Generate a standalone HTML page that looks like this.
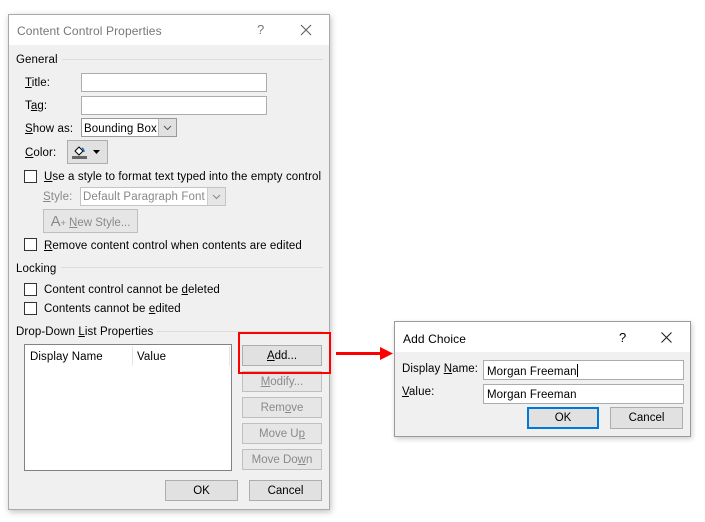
<!DOCTYPE html>
<html><head><meta charset="utf-8"><style>
*{box-sizing:border-box;margin:0;padding:0}
body{width:705px;height:522px;background:#fff;position:relative;overflow:hidden;font-family:"Liberation Sans",sans-serif;font-size:11.5px;color:#000}
.a{position:absolute;white-space:nowrap}
.t{line-height:14px;margin-top:1px;letter-spacing:0.1px}
.inp{position:absolute;background:#fff;border:1px solid #acacac}
.btn{position:absolute;background:#e1e1e1;border:1px solid #adadad;text-align:center;line-height:20px}
.dis{color:#8a8a8a;border-color:#bfbfbf;background:#e6e6e6}
.cb{position:absolute;width:13px;height:13px;border:1px solid #333;background:#fff}
.line{position:absolute;height:1px;background:#dcdcdc}
u{text-decoration:underline}
</style></head><body>
<div class="a" style="left:8px;top:14px;width:322px;height:496px;background:#f0f0f0;border:1px solid #aaa;box-shadow:1px 2px 6px rgba(0,0,0,0.25)"></div>
<div class="a" style="left:9px;top:15px;width:320px;height:30px;background:#fff"></div>
<div class="a t" style="left:17px;top:23px;color:#777;font-size:12px">Content Control Properties</div>
<div class="a t" style="left:257px;top:22px;color:#777;font-size:13px">?</div>
<svg class="a" style="left:300px;top:24px" width="12" height="12"><path d="M1 1L11 11M11 1L1 11" stroke="#666" stroke-width="1.2"/></svg>

<div class="a t" style="left:16px;top:52px">General</div><div class="line" style="left:62px;top:59px;width:261px"></div>
<div class="a t" style="left:25px;top:75px"><u>T</u>itle:</div><div class="inp" style="left:81px;top:73px;width:186px;height:19px"></div>
<div class="a t" style="left:25px;top:98px">T<u>a</u>g:</div><div class="inp" style="left:81px;top:96px;width:186px;height:19px"></div>
<div class="a t" style="left:25px;top:121px"><u>S</u>how as:</div>
<div class="inp" style="left:81px;top:118px;width:96px;height:19px;border-color:#999"></div>
<div class="a t" style="left:84px;top:121px">Bounding Box</div>
<div class="a" style="left:158px;top:119px;width:18px;height:17px;background:#e1e1e1;border-left:1px solid #bbb"></div>
<svg class="a" style="left:163px;top:125px" width="9" height="6"><path d="M1 1L4.5 4.5L8 1" stroke="#555" fill="none"/></svg>
<div class="a t" style="left:25px;top:145px"><u>C</u>olor:</div>
<div class="a" style="left:67px;top:140px;width:41px;height:24px;background:#e1e1e1;border:1px solid #adadad"></div>
<svg class="a" style="left:71px;top:143px" width="34" height="18"><path d="M4 8L8 4L12 8L8 12Z" fill="#fff" stroke="#000"/><path d="M11 5 q2 1 2 4" stroke="#1e73be" stroke-width="1.5" fill="none"/><rect x="1" y="13" width="15" height="3" fill="#666"/><path d="M22 7h7l-3.5 4z" fill="#000"/></svg>
<div class="cb" style="left:24px;top:170px"></div><div class="a t" style="left:44px;top:169px"><u>U</u>se a style to format text typed into the empty control</div>
<div class="a t" style="left:43px;top:189px;color:#888"><u>S</u>tyle:</div>
<div class="inp" style="left:80px;top:187px;width:146px;height:19px;border-color:#c4c4c4"></div>
<div class="a t" style="left:83px;top:189px;color:#888">Default Paragraph Font</div>
<div class="a" style="left:207px;top:188px;width:18px;height:17px;background:#e6e6e6;border-left:1px solid #ccc"></div>
<svg class="a" style="left:212px;top:194px" width="9" height="6"><path d="M1 1L4.5 4.5L8 1" stroke="#888" fill="none"/></svg>
<div class="btn dis" style="left:43px;top:209px;width:95px;height:24px;line-height:23px"><span style="font-size:15px">A</span><span style="font-size:9px">+</span> <u>N</u>ew Style...</div>
<div class="cb" style="left:24px;top:238px"></div><div class="a t" style="left:44px;top:238px"><u>R</u>emove content control when contents are edited</div>

<div class="a t" style="left:16px;top:261px">Locking</div><div class="line" style="left:61px;top:267px;width:262px"></div>
<div class="cb" style="left:24px;top:283px"></div><div class="a t" style="left:44px;top:282px">Content control cannot be <u>d</u>eleted</div>
<div class="cb" style="left:24px;top:302px"></div><div class="a t" style="left:44px;top:301px">Contents cannot be <u>e</u>dited</div>

<div class="a t" style="left:16px;top:324px">Drop-Down <u>L</u>ist Properties</div><div class="line" style="left:157px;top:331px;width:166px"></div>
<div class="inp" style="left:24px;top:344px;width:208px;height:127px;border-color:#828282"></div>
<div class="a t" style="left:30px;top:349px">Display Name</div>
<div class="a" style="left:132px;top:346px;width:1px;height:20px;background:#e5e5e5"></div>
<div class="a" style="left:229px;top:346px;width:1px;height:20px;background:#e5e5e5"></div>
<div class="a t" style="left:137px;top:349px">Value</div>
<div class="btn" style="left:242px;top:345px;width:80px;height:21px"><u>A</u>dd...</div>
<div class="btn dis" style="left:242px;top:371px;width:80px;height:21px"><u>M</u>odify...</div>
<div class="btn dis" style="left:242px;top:397px;width:80px;height:21px">Rem<u>o</u>ve</div>
<div class="btn dis" style="left:242px;top:423px;width:80px;height:21px">Move U<u>p</u></div>
<div class="btn dis" style="left:242px;top:449px;width:80px;height:21px">Move Do<u>w</u>n</div>
<div class="btn" style="left:165px;top:480px;width:73px;height:21px">OK</div>
<div class="btn" style="left:249px;top:480px;width:73px;height:21px">Cancel</div>
<div class="a" style="left:238px;top:332px;width:93px;height:42px;border:2px solid #f00"></div>
<div class="a" style="left:336px;top:352px;width:48px;height:3px;background:#f00"></div>
<svg class="a" style="left:380px;top:347px" width="14" height="13"><path d="M0 0L13 6.5L0 13Z" fill="#f00"/></svg>

<div class="a" style="left:394px;top:321px;width:297px;height:116px;background:#f0f0f0;border:1px solid #999;box-shadow:1px 2px 5px rgba(0,0,0,0.2)"></div>
<div class="a" style="left:395px;top:322px;width:295px;height:30px;background:#fff"></div>
<div class="a t" style="left:403px;top:331px;font-size:12px">Add Choice</div>
<div class="a t" style="left:619px;top:330px;font-size:13px">?</div>
<svg class="a" style="left:661px;top:332px" width="11" height="11"><path d="M0.5 0.5L10.5 10.5M10.5 0.5L0.5 10.5" stroke="#222" stroke-width="1.1"/></svg>
<div class="a t" style="left:402px;top:361px">Display <u>N</u>ame:</div>
<div class="inp" style="left:483px;top:360px;width:201px;height:20px"></div>
<div class="a t" style="left:487px;top:363px">Morgan Freeman<span style="display:inline-block;width:1px;height:13px;background:#000;vertical-align:-2px"></span></div>
<div class="a t" style="left:402px;top:384px"><u>V</u>alue:</div>
<div class="inp" style="left:483px;top:384px;width:201px;height:20px"></div>
<div class="a t" style="left:487px;top:387px">Morgan Freeman</div>
<div class="btn" style="left:527px;top:407px;width:72px;height:22px;border:2px solid #0078d7;line-height:19px">OK</div>
<div class="btn" style="left:610px;top:407px;width:73px;height:22px;line-height:21px">Cancel</div>
</body></html>
